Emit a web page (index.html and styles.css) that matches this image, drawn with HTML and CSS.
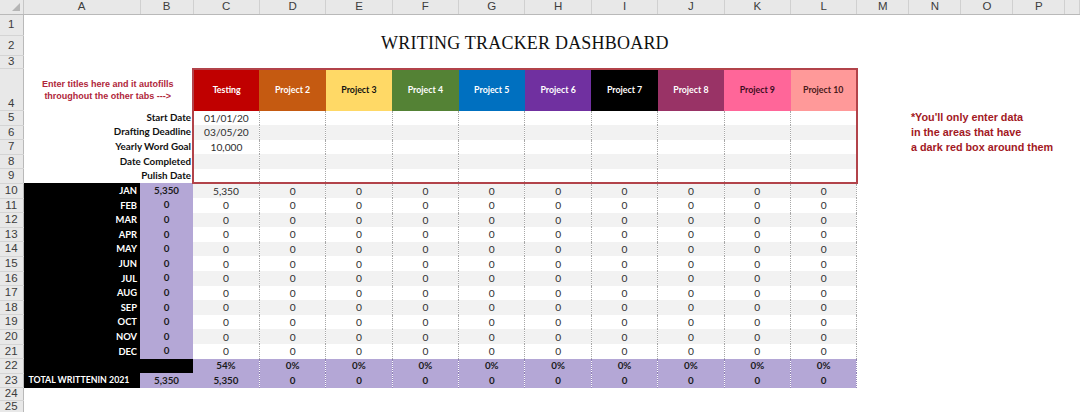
FILE: index.html
```html
<!DOCTYPE html>
<html lang="en">
<head>
<meta charset="utf-8">
<title>Writing Tracker Dashboard</title>
<link rel="stylesheet" href="styles.css">
</head>
<body>
<table class="sheet">
  <colgroup>
    <col class="c-rh"><col class="c-a"><col class="c-b">
    <col class="c-p"><col class="c-p"><col class="c-p"><col class="c-p"><col class="c-p">
    <col class="c-p"><col class="c-p"><col class="c-p"><col class="c-p"><col class="c-p">
    <col class="c-m"><col class="c-m"><col class="c-m"><col class="c-m"><col class="c-q">
  </colgroup>
  <tr class="hdr">
    <th class="corner"><svg width="23" height="14" viewBox="0 0 23 14"><polygon points="20,3 20,11 12,11" fill="#b5b5b5"/></svg></th>
    <th class="ch">A</th><th class="ch">B</th><th class="ch">C</th><th class="ch">D</th><th class="ch">E</th>
    <th class="ch">F</th><th class="ch">G</th><th class="ch">H</th><th class="ch">I</th><th class="ch">J</th>
    <th class="ch">K</th><th class="ch">L</th><th class="ch">M</th><th class="ch">N</th><th class="ch">O</th>
    <th class="ch">P</th><th class="ch"></th>
  </tr>
  <tr class="r1">
    <th class="rh">1</th><td></td><td></td>
    <td class="title" colspan="10" rowspan="2">WRITING TRACKER DASHBOARD</td>
    <td></td><td></td><td></td><td></td><td></td>
  </tr>
  <tr class="r2">
    <th class="rh">2</th><td></td><td></td>
    <td></td><td></td><td></td><td></td><td></td>
  </tr>
  <tr class="r3">
    <th class="rh">3</th><td></td><td></td>
    <td></td><td></td><td></td><td></td><td></td><td></td><td></td><td></td><td></td><td></td>
    <td></td><td></td><td></td><td></td><td></td>
  </tr>
  <tr class="r4">
    <th class="rh rh-bottom">4</th>
    <td class="hint" colspan="2">Enter titles here and it autofills<br>throughout the other tabs ---&gt;</td>
    <td class="ph p1 bl">Testing</td>
    <td class="ph p2">Project 2</td>
    <td class="ph p3">Project 3</td>
    <td class="ph p4">Project 4</td>
    <td class="ph p5">Project 5</td>
    <td class="ph p6">Project 6</td>
    <td class="ph p7">Project 7</td>
    <td class="ph p8">Project 8</td>
    <td class="ph p9">Project 9</td>
    <td class="ph p10 br">Project 10</td>
    <td></td><td></td><td></td><td></td><td></td>
  </tr>
  <tr class="r">
    <th class="rh">5</th>
    <td class="lbl" colspan="2">Start Date</td>
    <td class="v bl">01/01/20</td><td class="v"></td><td class="v"></td><td class="v"></td><td class="v"></td>
    <td class="v"></td><td class="v"></td><td class="v"></td><td class="v"></td><td class="v br"></td>
    <td></td><td class="note" colspan="4">*You'll only enter data</td>
  </tr>
  <tr class="r even">
    <th class="rh">6</th>
    <td class="lbl" colspan="2">Drafting Deadline</td>
    <td class="v bl">03/05/20</td><td class="v"></td><td class="v"></td><td class="v"></td><td class="v"></td>
    <td class="v"></td><td class="v"></td><td class="v"></td><td class="v"></td><td class="v br"></td>
    <td></td><td class="note" colspan="4">in the areas that have</td>
  </tr>
  <tr class="r">
    <th class="rh">7</th>
    <td class="lbl" colspan="2">Yearly Word Goal</td>
    <td class="v bl">10,000</td><td class="v"></td><td class="v"></td><td class="v"></td><td class="v"></td>
    <td class="v"></td><td class="v"></td><td class="v"></td><td class="v"></td><td class="v br"></td>
    <td></td><td class="note" colspan="4">a dark red box around them</td>
  </tr>
  <tr class="r even">
    <th class="rh">8</th>
    <td class="lbl" colspan="2">Date Completed</td>
    <td class="v bl"></td><td class="v"></td><td class="v"></td><td class="v"></td><td class="v"></td>
    <td class="v"></td><td class="v"></td><td class="v"></td><td class="v"></td><td class="v br"></td>
    <td></td><td></td><td></td><td></td><td></td>
  </tr>
  <tr class="r last">
    <th class="rh">9</th>
    <td class="lbl" colspan="2">Pulish Date</td>
    <td class="v bl"></td><td class="v"></td><td class="v"></td><td class="v"></td><td class="v"></td>
    <td class="v"></td><td class="v"></td><td class="v"></td><td class="v"></td><td class="v br"></td>
    <td></td><td></td><td></td><td></td><td></td>
  </tr>
  <tr class="r even">
    <th class="rh">10</th><td class="mon">JAN</td><td class="tot">5,350</td>
    <td class="v">5,350</td><td class="v">0</td><td class="v">0</td><td class="v">0</td><td class="v">0</td>
    <td class="v">0</td><td class="v">0</td><td class="v">0</td><td class="v">0</td><td class="v">0</td>
    <td></td><td></td><td></td><td></td><td></td>
  </tr>
  <tr class="r">
    <th class="rh">11</th><td class="mon">FEB</td><td class="tot">0</td>
    <td class="v">0</td><td class="v">0</td><td class="v">0</td><td class="v">0</td><td class="v">0</td>
    <td class="v">0</td><td class="v">0</td><td class="v">0</td><td class="v">0</td><td class="v">0</td>
    <td></td><td></td><td></td><td></td><td></td>
  </tr>
  <tr class="r even">
    <th class="rh">12</th><td class="mon">MAR</td><td class="tot">0</td>
    <td class="v">0</td><td class="v">0</td><td class="v">0</td><td class="v">0</td><td class="v">0</td>
    <td class="v">0</td><td class="v">0</td><td class="v">0</td><td class="v">0</td><td class="v">0</td>
    <td></td><td></td><td></td><td></td><td></td>
  </tr>
  <tr class="r">
    <th class="rh">13</th><td class="mon">APR</td><td class="tot">0</td>
    <td class="v">0</td><td class="v">0</td><td class="v">0</td><td class="v">0</td><td class="v">0</td>
    <td class="v">0</td><td class="v">0</td><td class="v">0</td><td class="v">0</td><td class="v">0</td>
    <td></td><td></td><td></td><td></td><td></td>
  </tr>
  <tr class="r even">
    <th class="rh">14</th><td class="mon">MAY</td><td class="tot">0</td>
    <td class="v">0</td><td class="v">0</td><td class="v">0</td><td class="v">0</td><td class="v">0</td>
    <td class="v">0</td><td class="v">0</td><td class="v">0</td><td class="v">0</td><td class="v">0</td>
    <td></td><td></td><td></td><td></td><td></td>
  </tr>
  <tr class="r">
    <th class="rh">15</th><td class="mon">JUN</td><td class="tot">0</td>
    <td class="v">0</td><td class="v">0</td><td class="v">0</td><td class="v">0</td><td class="v">0</td>
    <td class="v">0</td><td class="v">0</td><td class="v">0</td><td class="v">0</td><td class="v">0</td>
    <td></td><td></td><td></td><td></td><td></td>
  </tr>
  <tr class="r even">
    <th class="rh">16</th><td class="mon">JUL</td><td class="tot">0</td>
    <td class="v">0</td><td class="v">0</td><td class="v">0</td><td class="v">0</td><td class="v">0</td>
    <td class="v">0</td><td class="v">0</td><td class="v">0</td><td class="v">0</td><td class="v">0</td>
    <td></td><td></td><td></td><td></td><td></td>
  </tr>
  <tr class="r">
    <th class="rh">17</th><td class="mon">AUG</td><td class="tot">0</td>
    <td class="v">0</td><td class="v">0</td><td class="v">0</td><td class="v">0</td><td class="v">0</td>
    <td class="v">0</td><td class="v">0</td><td class="v">0</td><td class="v">0</td><td class="v">0</td>
    <td></td><td></td><td></td><td></td><td></td>
  </tr>
  <tr class="r even">
    <th class="rh">18</th><td class="mon">SEP</td><td class="tot">0</td>
    <td class="v">0</td><td class="v">0</td><td class="v">0</td><td class="v">0</td><td class="v">0</td>
    <td class="v">0</td><td class="v">0</td><td class="v">0</td><td class="v">0</td><td class="v">0</td>
    <td></td><td></td><td></td><td></td><td></td>
  </tr>
  <tr class="r">
    <th class="rh">19</th><td class="mon">OCT</td><td class="tot">0</td>
    <td class="v">0</td><td class="v">0</td><td class="v">0</td><td class="v">0</td><td class="v">0</td>
    <td class="v">0</td><td class="v">0</td><td class="v">0</td><td class="v">0</td><td class="v">0</td>
    <td></td><td></td><td></td><td></td><td></td>
  </tr>
  <tr class="r even">
    <th class="rh">20</th><td class="mon">NOV</td><td class="tot">0</td>
    <td class="v">0</td><td class="v">0</td><td class="v">0</td><td class="v">0</td><td class="v">0</td>
    <td class="v">0</td><td class="v">0</td><td class="v">0</td><td class="v">0</td><td class="v">0</td>
    <td></td><td></td><td></td><td></td><td></td>
  </tr>
  <tr class="r">
    <th class="rh">21</th><td class="mon">DEC</td><td class="tot">0</td>
    <td class="v">0</td><td class="v">0</td><td class="v">0</td><td class="v">0</td><td class="v">0</td>
    <td class="v">0</td><td class="v">0</td><td class="v">0</td><td class="v">0</td><td class="v">0</td>
    <td></td><td></td><td></td><td></td><td></td>
  </tr>
  <tr class="r sumrow">
    <th class="rh">22</th><td class="mon"></td><td class="mon"></td>
    <td class="v">54%</td><td class="v">0%</td><td class="v">0%</td><td class="v">0%</td><td class="v">0%</td>
    <td class="v">0%</td><td class="v">0%</td><td class="v">0%</td><td class="v">0%</td><td class="v">0%</td>
    <td></td><td></td><td></td><td></td><td></td>
  </tr>
  <tr class="r sumrow">
    <th class="rh">23</th><td class="total-lbl">TOTAL WRITTENIN 2021</td><td class="tot">5,350</td>
    <td class="v">5,350</td><td class="v">0</td><td class="v">0</td><td class="v">0</td><td class="v">0</td>
    <td class="v">0</td><td class="v">0</td><td class="v">0</td><td class="v">0</td><td class="v">0</td>
    <td></td><td></td><td></td><td></td><td></td>
  </tr>
  <tr class="rs">
    <th class="rh">24</th><td></td><td></td>
    <td></td><td></td><td></td><td></td><td></td><td></td><td></td><td></td><td></td><td></td>
    <td></td><td></td><td></td><td></td><td></td>
  </tr>
  <tr class="rs">
    <th class="rh">25</th><td></td><td></td>
    <td></td><td></td><td></td><td></td><td></td><td></td><td></td><td></td><td></td><td></td>
    <td></td><td></td><td></td><td></td><td></td>
  </tr>
</table>
</body>
</html>
```

FILE: styles.css
```css
html, body {
  margin: 0;
  padding: 0;
  background: #ffffff;
}
body {
  width: 1080px;
  height: 412px;
  overflow: hidden;
  font-family: "Lato", "Open Sans", sans-serif;
  color: #222;
}

.sheet {
  border-collapse: collapse;
  table-layout: fixed;
  width: 1080px;
}
td, th {
  padding: 0;
  overflow: hidden;
  white-space: nowrap;
  line-height: 1;
  font-weight: normal;
}

.c-rh { width: 23px; }
.c-a { width: 117px; }
.c-b { width: 53px; }
.c-p { width: 66.4px; }
.c-m { width: 52px; }
.c-q { width: 15px; }

/* row heights */
.hdr { height: 14px; }
.r1 { height: 21px; }
.r2 { height: 20px; }
.r3 { height: 13px; }
.r4 { height: 42px; }
.r { height: 14.6px; }
.rs { height: 12.6px; }

/* headers */
.corner {
  background: #e8e8e8;
  border-right: 1px solid #c6c6c6;
  border-bottom: 1px solid #b9b9b9;
}
.corner svg { display: block; }
.ch {
  background: #e8e8e8;
  border-right: 1px solid #d0d0d0;
  border-bottom: 1px solid #b9b9b9;
  font-family: "Liberation Sans", Arial, sans-serif;
  font-size: 11.5px;
  color: #3c3c3c;
  text-align: center;
  vertical-align: middle;
}
.rh {
  background: #e8e8e8;
  border-right: 1px solid #b9b9b9;
  border-bottom: 1px solid #d4d4d4;
  font-family: "Liberation Sans", Arial, sans-serif;
  font-size: 11.5px;
  color: #3c3c3c;
  text-align: center;
  vertical-align: middle;
}
.rh-bottom {
  vertical-align: bottom;
  padding-bottom: 1px;
}

/* title */
.title {
  vertical-align: top;
  padding-top: 19px;
  text-align: center;
  font-family: "Liberation Serif", "Times New Roman", serif;
  font-size: 18px;
  line-height: 18px;
  color: #111;
  letter-spacing: 0.2px;
}

/* notes */
.hint {
  text-align: center;
  vertical-align: middle;
  font-family: "Liberation Sans", Arial, sans-serif;
  font-weight: bold;
  font-size: 9px;
  line-height: 12px;
  color: #b0263a;
}
.note {
  text-align: left;
  vertical-align: middle;
  padding-left: 2px;
  font-family: "Liberation Sans", Arial, sans-serif;
  font-weight: bold;
  font-size: 10.8px;
  color: #a3191f;
  overflow: visible;
}

/* project headers */
.ph {
  text-align: center;
  vertical-align: middle;
  font-weight: bold;
  font-size: 8.8px;
  color: #ffffff;
  border-top: 2px solid #b2434a;
}
.p1 { background: #c00000; }
.p2 { background: #c55a11; }
.p3 { background: #ffd966; color: #111; }
.p4 { background: #548235; }
.p5 { background: #0070c0; }
.p6 { background: #7030a0; }
.p7 { background: #000000; }
.p8 { background: #993366; }
.p9 { background: #ff6699; color: #3d0d22; }
.p10 { background: #ff9999; color: #4a1a1a; }

/* red box edges */
.bl { border-left: 2px solid #b2434a; }
.br { border-right: 2px solid #b2434a !important; }
.last .v { border-bottom: 2px solid #b2434a; }

/* labels */
.lbl {
  text-align: right;
  vertical-align: middle;
  padding-right: 1px;
  font-weight: bold;
  font-size: 9.8px;
  color: #111;
}

/* values */
.v {
  text-align: center;
  vertical-align: middle;
  font-size: 10.2px;
  color: #2e2e2e;
  border-right: 1px dotted #a8a8a8;
}
.even .v { background: #f2f2f2; }

/* month block */
.mon {
  background: #000000;
  color: #ffffff;
  text-align: right;
  vertical-align: middle;
  padding-right: 3px;
  font-weight: bold;
  font-size: 9.4px;
}
.tot {
  background: #b4a7d6;
  text-align: center;
  vertical-align: middle;
  font-weight: bold;
  font-size: 9.8px;
  color: #1a1a1a;
}
.total-lbl {
  background: #000000;
  color: #ffffff;
  text-align: left;
  vertical-align: middle;
  padding-left: 5px;
  font-weight: bold;
  font-size: 8.8px;
}
.sumrow .v {
  background: #b4a7d6;
  font-weight: bold;
  font-size: 9.8px;
  color: #1a1a1a;
  border-right: 1px dotted #8f82b5;
}
```
